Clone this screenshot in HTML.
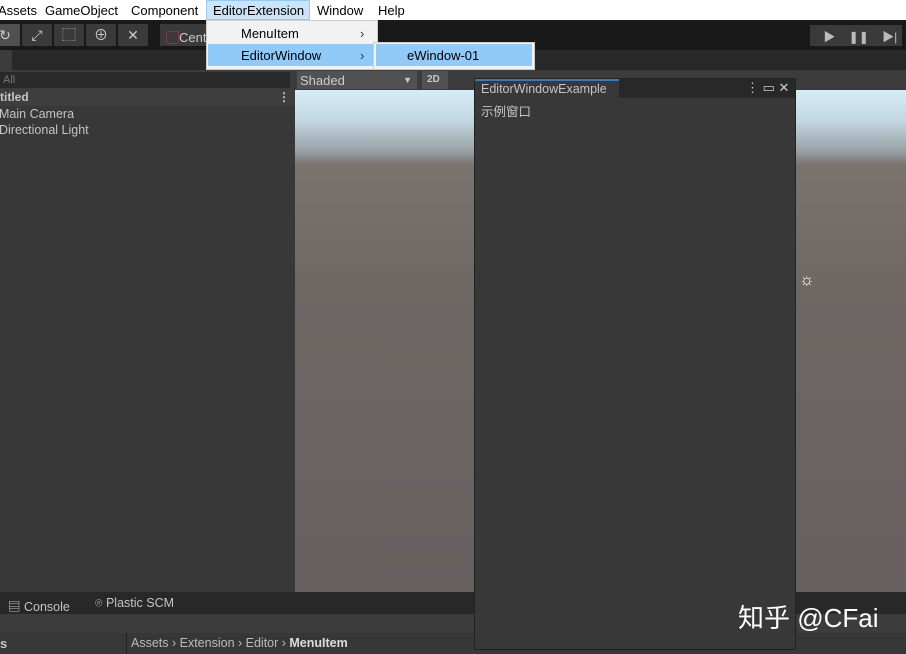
<html><head><style>
*{margin:0;padding:0;box-sizing:border-box}
body{width:906px;height:654px;overflow:hidden;background:#383838;font-family:"Liberation Sans","Noto Sans CJK SC",sans-serif;position:relative;font-size:13px;color:#c4c4c4}
.a{position:absolute}
.mb{top:0;left:0;width:906px;height:20px;background:#fff;color:#000}
.mb span{position:absolute;top:3px;font-size:13px}
.tb{position:absolute;top:24px;width:30px;height:22px;background:#3a3a3a;color:#ccc;text-align:center;font-size:14px;line-height:22px}
</style></head><body>
<div class="a mb">
<span style="left:-2px">Assets</span><span style="left:45px">GameObject</span><span style="left:131px">Component</span>
<div class="a" style="left:206px;top:0;width:104px;height:20px;background:#cce4f7;border:1px solid #99c9ef"></div>
<span style="left:213px">EditorExtension</span><span style="left:317px">Window</span><span style="left:378px">Help</span></div>
<div class="a" style="top:20px;left:0;width:906px;height:30px;background:#191919"></div>
<div class="tb" style="left:-10px;background:#505050">↻</div>
<div class="tb" style="left:22px">⤢</div>
<div class="tb" style="left:54px">⬚</div>
<div class="tb" style="left:86px">⊕</div>
<div class="tb" style="left:118px">✕</div>
<div class="a" style="top:24px;left:160px;width:50px;height:22px;background:#3a3a3a;color:#ccc;padding:3px 0 0 6px"><span style="color:#d44">▢</span>Cent</div>
<div class="a" style="top:25px;left:810px;width:92px;height:21px;background:#3a3a3a;color:#bbb;font-size:12px;padding-top:3px">&nbsp;&nbsp;&nbsp;&nbsp;▶&nbsp;&nbsp;&nbsp;&nbsp;❚❚&nbsp;&nbsp;&nbsp;&nbsp;▶|</div>
<div class="a" style="top:50px;left:0;width:906px;height:20px;background:#282828"></div>
<div class="a" style="top:50px;left:0;width:12px;height:20px;background:#3c3c3c"></div>
<div class="a" style="top:70px;left:0;width:295px;height:20px;background:#3c3c3c"></div>
<div class="a" style="top:72px;left:0;width:290px;height:16px;background:#2a2a2a;color:#777;font-size:11px;padding:2px 3px">All</div>
<div class="a" style="top:90px;left:0;width:295px;height:16px;background:#3e3e3e;font-weight:bold;padding-left:0;font-size:12px">titled<span style="position:absolute;left:278px">⋮</span></div>
<div class="a" style="top:107px;left:-1px;font-size:12.5px">Main Camera</div>
<div class="a" style="top:123px;left:-1px;font-size:12.5px">Directional Light</div>
<div class="a" style="top:70px;left:295px;width:611px;height:20px;background:#3c3c3c"></div>
<div class="a" style="top:71px;left:297px;width:120px;height:18px;background:#515151;color:#ccc;padding:2px 3px">Shaded<span style="position:absolute;right:5px;font-size:9px;top:4px">▼</span></div>
<div class="a" style="top:71px;left:422px;width:26px;height:18px;background:#515151;font-size:10px;font-weight:bold;padding:3px 5px">2D</div>
<div class="a" style="top:90px;left:295px;width:611px;height:502px;background:linear-gradient(#d6ecf7 0,#c4d8e3 30px,#9aa3a8 60px,#7b736f 75px,#6f6764 200px,#676060 502px)"></div>
<div class="a" style="top:270px;left:799px;color:#fff;font-size:17px">☼</div>
<div class="a" style="top:592px;left:0;width:906px;height:22px;background:#282828;font-size:12.5px">
<span class="a" style="left:8px;top:4px">▤ Console</span><span class="a" style="left:95px;top:4px">⌾ Plastic SCM</span></div>
<div class="a" style="top:614px;left:0;width:906px;height:19px;background:#3c3c3c"></div>
<div class="a" style="top:633px;left:0;width:125px;height:21px;background:#383838;font-weight:bold;padding:3px 0 0 0">s</div>
<div class="a" style="top:633px;left:126px;width:780px;height:21px;background:#373737;border-left:1px solid #222;font-size:12.5px;color:#bbb;padding:3px 4px">Assets › Extension › Editor › <b style="color:#ddd">MenuItem</b></div>
<div class="a" style="top:78px;left:474px;width:322px;height:572px;background:#383838;border:1px solid #222"></div>
<div class="a" style="top:79px;left:475px;width:320px;height:19px;background:#282828"></div>
<div class="a" style="top:79px;left:475px;width:144px;height:19px;background:#383838;border-top:2px solid #3a79bb;color:#c4c4c4;font-size:12.5px;padding:1px 6px">EditorWindowExample</div>
<div class="a" style="top:80px;left:746px;color:#ccc;font-size:13px">⋮ ▭ ✕</div>
<div class="a" style="top:101px;left:481px;font-size:12.5px">示例窗口</div>
<div class="a" style="top:20px;left:206px;width:172px;height:50px;background:#f2f2f2;border:1px solid #ccc;color:#000"></div>
<div class="a" style="top:44px;left:208px;width:168px;height:22px;background:#91c9f7"></div>
<div class="a" style="top:26px;left:241px;color:#000">MenuItem</div><div class="a" style="top:26px;left:360px;color:#333">›</div>
<div class="a" style="top:48px;left:241px;color:#000">EditorWindow</div><div class="a" style="top:48px;left:360px;color:#333">›</div>
<div class="a" style="top:42px;left:373px;width:162px;height:28px;background:#f2f2f2;border:1px solid #ccc"></div>
<div class="a" style="top:44px;left:376px;width:156px;height:22px;background:#91c9f7;color:#000;padding:4px 0 0 31px">eWindow-01</div>
<div class="a" style="top:598px;left:738px;color:#fff;font-size:26px">知乎 @CFai</div>
</body></html>
